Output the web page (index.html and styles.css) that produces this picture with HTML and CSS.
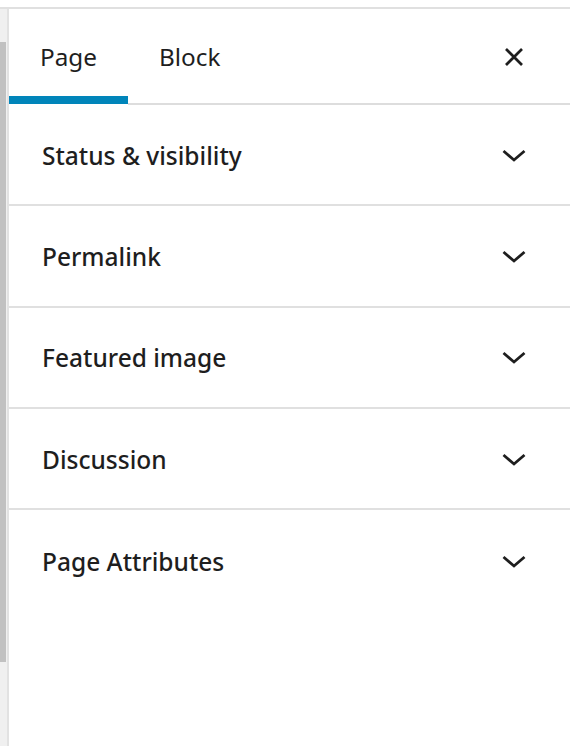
FILE: index.html
```html
<!DOCTYPE html>
<html lang="en">
<head>
<meta charset="utf-8">
<title>Sidebar</title>
<link rel="stylesheet" href="styles.css">
</head>
<body>
<div class="app">
  <div class="topgap"></div>
  <div class="main">
    <div class="gutter"><div class="thumb"></div></div>
    <aside class="sidebar">
      <div class="tabs">
        <div class="tab-list">
          <button class="tab is-active">Page</button>
          <button class="tab">Block</button>
        </div>
        <button class="close" aria-label="Close settings">
          <svg width="18" height="18" viewBox="0 0 18 18"><path d="M1 1L17 17M17 1L1 17" stroke="#1e1e1e" stroke-width="2.7" fill="none"/></svg>
        </button>
      </div>
      <div class="panel"><span class="panel-title">Status &amp; visibility</span><svg class="chev" width="24" height="14" viewBox="0 0 24 14"><polyline points="1.5,2 12,11 22.5,2" fill="none" stroke="#1e1e1e" stroke-width="2.8"/></svg></div>
      <div class="panel"><span class="panel-title">Permalink</span><svg class="chev" width="24" height="14" viewBox="0 0 24 14"><polyline points="1.5,2 12,11 22.5,2" fill="none" stroke="#1e1e1e" stroke-width="2.8"/></svg></div>
      <div class="panel"><span class="panel-title">Featured image</span><svg class="chev" width="24" height="14" viewBox="0 0 24 14"><polyline points="1.5,2 12,11 22.5,2" fill="none" stroke="#1e1e1e" stroke-width="2.8"/></svg></div>
      <div class="panel"><span class="panel-title">Discussion</span><svg class="chev" width="24" height="14" viewBox="0 0 24 14"><polyline points="1.5,2 12,11 22.5,2" fill="none" stroke="#1e1e1e" stroke-width="2.8"/></svg></div>
      <div class="panel panel-last"><span class="panel-title">Page Attributes</span><svg class="chev" width="24" height="14" viewBox="0 0 24 14"><polyline points="1.5,2 12,11 22.5,2" fill="none" stroke="#1e1e1e" stroke-width="2.8"/></svg></div>
    </aside>
  </div>
</div>
</body>
</html>
```
FILE: styles.css
```css
html, body {
  margin: 0;
  padding: 0;
  height: 100%;
  background: #ffffff;
}
body {
  font-family: "Noto Sans", "Open Sans", sans-serif;
  color: #1e1e1e;
}
.app {
  display: flex;
  flex-direction: column;
  height: 100vh;
}
.topgap {
  height: 7px;
  border-bottom: 2px solid #e0e0e0;
  flex: none;
}
.main {
  display: flex;
  flex: 1;
  min-height: 0;
}
.gutter {
  width: 7px;
  background: #f0f0f0;
  border-right: 2px solid #e2e2e2;
  flex: none;
}
.thumb {
  width: 6px;
  height: 620px;
  margin-top: 33px;
  background: #c1c1c1;
}
.sidebar {
  flex: 1;
  display: flex;
  flex-direction: column;
}
.tabs {
  display: flex;
  align-items: center;
  justify-content: space-between;
  height: 94px;
  border-bottom: 2px solid #dddddd;
}
.tab-list {
  display: flex;
  align-self: stretch;
  align-items: stretch;
}
.tab {
  border: 0;
  background: transparent;
  font: inherit;
  font-size: 24.3px;
  color: #1e1e1e;
  padding: 1px 31px 0;
  cursor: pointer;
}
.tab.is-active {
  background: #ffffff;
  margin-bottom: -2px;
  padding-bottom: 2px;
  box-shadow: inset 0 -1px 0 #ffffff, inset 0 -9px 0 #0085ba;
}
.close {
  border: 0;
  background: none;
  padding: 0;
  margin-right: 47px;
  margin-top: 2px;
  display: flex;
  cursor: pointer;
}
.panel {
  display: flex;
  align-items: center;
  justify-content: space-between;
  padding: 1px 44px 0 33px;
  box-sizing: border-box;
  height: 101.3px;
  border-bottom: 2px solid #e0e0e0;
}
.panel-last {
  border-bottom: 0;
}
.panel-title {
  font-size: 24.5px;
  font-weight: 500;
}
.chev {
  display: block;
  margin-top: 1px;
}
```
